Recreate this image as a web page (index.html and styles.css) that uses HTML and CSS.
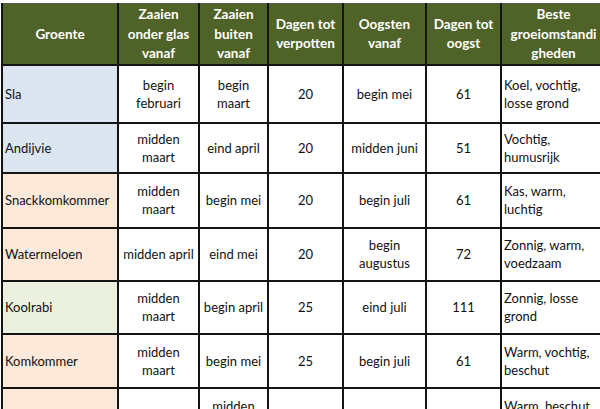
FILE: index.html
```html
<!DOCTYPE html>
<html lang="nl">
<head>
<meta charset="utf-8">
<title>Zaaikalender</title>
<link rel="stylesheet" href="styles.css">
</head>
<body>
<div class="sheet">
<table class="grid">
  <colgroup>
    <col class="c1"><col class="c2"><col class="c3"><col class="c4"><col class="c5"><col class="c6"><col class="c7">
  </colgroup>
  <thead>
    <tr class="head">
      <th>Groente</th>
      <th>Zaaien onder glas vanaf</th>
      <th>Zaaien buiten vanaf</th>
      <th>Dagen tot verpotten</th>
      <th>Oogsten vanaf</th>
      <th>Dagen tot oogst</th>
      <th>Beste groeiomstandi<wbr>gheden</th>
    </tr>
  </thead>
  <tbody>
    <tr class="r1">
      <td class="name blue">Sla</td>
      <td>begin februari</td>
      <td>begin maart</td>
      <td>20</td>
      <td>begin mei</td>
      <td>61</td>
      <td class="cond">Koel, vochtig, losse grond</td>
    </tr>
    <tr class="r2">
      <td class="name blue">Andijvie</td>
      <td>midden maart</td>
      <td>eind april</td>
      <td>20</td>
      <td>midden juni</td>
      <td>51</td>
      <td class="cond">Vochtig, humusrijk</td>
    </tr>
    <tr class="r3">
      <td class="name peach">Snackkomkommer</td>
      <td>midden maart</td>
      <td>begin mei</td>
      <td>20</td>
      <td>begin juli</td>
      <td>61</td>
      <td class="cond">Kas, warm, luchtig</td>
    </tr>
    <tr class="r4">
      <td class="name peach">Watermeloen</td>
      <td>midden april</td>
      <td>eind mei</td>
      <td>20</td>
      <td>begin augustus</td>
      <td>72</td>
      <td class="cond">Zonnig, warm, voedzaam</td>
    </tr>
    <tr class="r5">
      <td class="name green">Koolrabi</td>
      <td>midden maart</td>
      <td>begin april</td>
      <td>25</td>
      <td>eind juli</td>
      <td>111</td>
      <td class="cond">Zonnig, losse grond</td>
    </tr>
    <tr class="r6">
      <td class="name peach">Komkommer</td>
      <td>midden maart</td>
      <td>begin mei</td>
      <td>25</td>
      <td>begin juli</td>
      <td>61</td>
      <td class="cond">Warm, vochtig, beschut</td>
    </tr>
    <tr class="r7">
      <td class="name peach">Paprika</td>
      <td>begin maart</td>
      <td>midden mei of later</td>
      <td>30</td>
      <td>eind juli</td>
      <td>90</td>
      <td class="cond">Warm, beschut, zonnig, voedzaam</td>
    </tr>
  </tbody>
</table>
</div>
</body>
</html>
```

FILE: styles.css
```css
html, body {
  margin: 0;
  padding: 0;
  background: #ffffff;
  overflow: hidden;
}

.sheet {
  width: 600px;
  height: 409px;
  overflow: hidden;
  padding: 3px 0 0 1px;
  box-sizing: border-box;
}

.grid {
  border-collapse: collapse;
  table-layout: fixed;
  width: 610px;
  font-family: Lato, "Open Sans", "Liberation Sans", sans-serif;
  font-size: 13px;
  color: #111111;
}

.c1 { width: 116px; }
.c2 { width: 81px; }
.c3 { width: 69px; }
.c4 { width: 75px; }
.c5 { width: 83px; }
.c6 { width: 75px; }
.c7 { width: 111px; }

.grid th,
.grid td {
  border: 2px solid #141414;
  padding: 0 3px;
  text-align: center;
  vertical-align: middle;
  line-height: 18px;
}

.head th {
  background: #4f6228;
  color: #ffffff;
  font-weight: 700;
  font-size: 13.5px;
  height: 58px;
  line-height: 19.5px;
  padding: 1px 2px 0;
  border-top-color: #5a5a5a;
  border-top-width: 1px;
}

.head th:last-child {
  padding-right: 8px;
}

.r1 td { height: 56px; }
.r2 td { height: 48px; }
.r3 td { height: 53px; }
.r4 td { height: 51px; }
.r5 td { height: 51px; }
.r6 td { height: 52px; }
.r7 td { height: 70px; }

.grid td.name {
  text-align: left;
  padding-left: 2px;
}

.grid td.cond {
  text-align: left;
  padding-left: 2px;
  padding-right: 16px;
}

.blue { background: #dce6f1; }
.peach { background: #fde9d9; }
.green { background: #ebf1de; }
```
